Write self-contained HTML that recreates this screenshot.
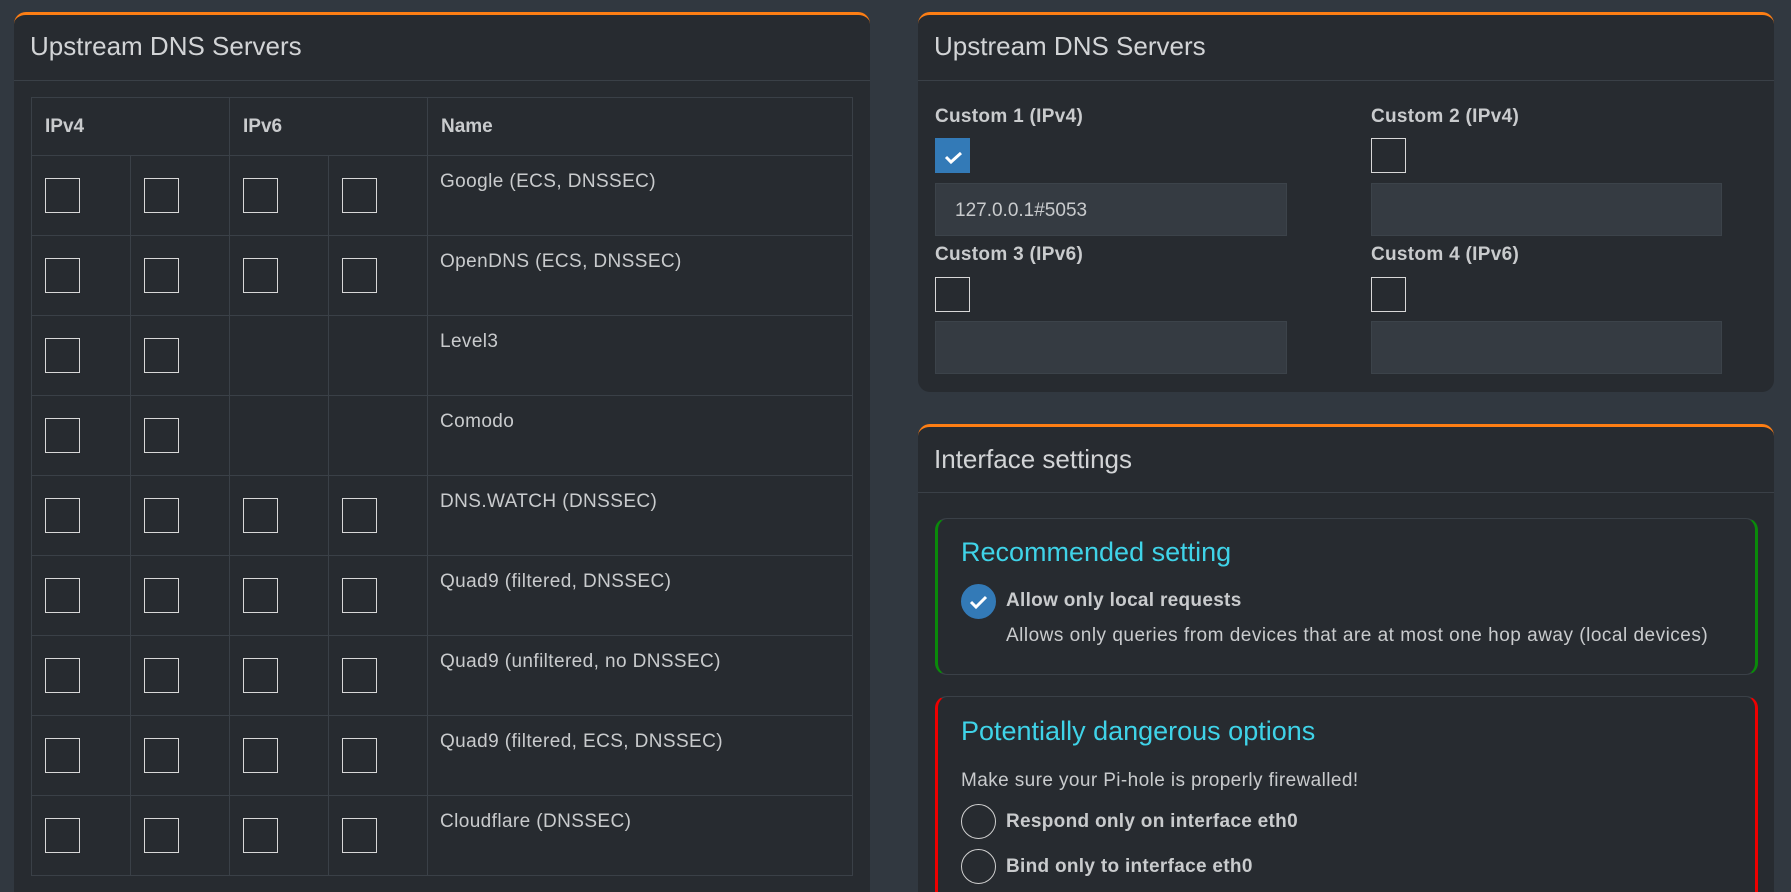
<!DOCTYPE html>
<html style="width:1791px;height:892px;overflow:hidden"><head><meta charset="utf-8"><style>
*{box-sizing:border-box;margin:0;padding:0}
body{width:1791px;height:892px;overflow:hidden;background:#313840;font-family:"Liberation Sans",sans-serif;color:#c9cbcd;position:relative}
.card{position:absolute;background:#272b30;border-radius:12px;border-top:3px solid #fd7e14;overflow:hidden}
.hd{position:absolute;left:0;right:0;top:0;height:66px;border-bottom:1px solid #3a4047}
.hd span{position:absolute;left:16px;top:16px;font-size:26px;color:#d2d4d6}
.abs{position:absolute}
.cb{position:absolute;width:35px;height:35px;border:1px solid #d8d8d8}
.lbl{position:absolute;font-weight:bold;font-size:19px;letter-spacing:0.3px}
.inp{position:absolute;background:#353b42;border:1px solid #3c434a;width:352px;height:53px;font-size:19px;padding:16px 0 0 19px}
table{position:absolute;left:17px;top:82px;border-collapse:collapse}
td{border:1px solid #3a4047;width:99px;height:80px;vertical-align:top;position:relative;font-size:19px;letter-spacing:0.4px}
th{border:1px solid #3a4047;height:58px;text-align:left;padding-left:13px;font-size:19px}
td .cb{left:13px;top:22px}
td.n{width:425px;padding:15px 0 0 12px}
.box{position:absolute;left:17px;width:823px;border-radius:12px;border:1px solid #3a4047;border-left:3px solid;border-right:3px solid}
.h3{position:absolute;left:23px;font-size:27px;color:#3fd3e8}
.rd{position:absolute;left:23px;width:35px;height:35px;border-radius:50%;border:1px solid #d0d0d0}
</style></head><body>
<div class="card" style="left:14px;top:12px;width:856px;height:880px;border-bottom-left-radius:0;border-bottom-right-radius:0">
<div class="hd"><span>Upstream DNS Servers</span></div>
<table>
<tr><th colspan="2">IPv4</th><th colspan="2">IPv6</th><th>Name</th></tr>
<tr><td><div class="cb"></div></td><td><div class="cb"></div></td><td><div class="cb"></div></td><td><div class="cb"></div></td><td class="n">Google (ECS, DNSSEC)</td></tr>
<tr><td><div class="cb"></div></td><td><div class="cb"></div></td><td><div class="cb"></div></td><td><div class="cb"></div></td><td class="n">OpenDNS (ECS, DNSSEC)</td></tr>
<tr><td><div class="cb"></div></td><td><div class="cb"></div></td><td></td><td></td><td class="n">Level3</td></tr>
<tr><td><div class="cb"></div></td><td><div class="cb"></div></td><td></td><td></td><td class="n">Comodo</td></tr>
<tr><td><div class="cb"></div></td><td><div class="cb"></div></td><td><div class="cb"></div></td><td><div class="cb"></div></td><td class="n">DNS.WATCH (DNSSEC)</td></tr>
<tr><td><div class="cb"></div></td><td><div class="cb"></div></td><td><div class="cb"></div></td><td><div class="cb"></div></td><td class="n">Quad9 (filtered, DNSSEC)</td></tr>
<tr><td><div class="cb"></div></td><td><div class="cb"></div></td><td><div class="cb"></div></td><td><div class="cb"></div></td><td class="n">Quad9 (unfiltered, no DNSSEC)</td></tr>
<tr><td><div class="cb"></div></td><td><div class="cb"></div></td><td><div class="cb"></div></td><td><div class="cb"></div></td><td class="n">Quad9 (filtered, ECS, DNSSEC)</td></tr>
<tr><td><div class="cb"></div></td><td><div class="cb"></div></td><td><div class="cb"></div></td><td><div class="cb"></div></td><td class="n">Cloudflare (DNSSEC)</td></tr>
</table>
</div>

<div class="card" style="left:918px;top:12px;width:856px;height:380px">
<div class="hd"><span>Upstream DNS Servers</span></div>
<div class="lbl" style="left:17px;top:91px">Custom 1 (IPv4)</div>
<div class="cb" style="left:17px;top:123px;background:#337ab7;border-color:#337ab7"><svg width="35" height="35" viewBox="0 0 35 35"><path d="M10 18l5 5 10-9" fill="none" stroke="#fff" stroke-width="3"/></svg></div>
<div class="inp" style="left:17px;top:168px">127.0.0.1#5053</div>
<div class="lbl" style="left:453px;top:91px">Custom 2 (IPv4)</div>
<div class="cb" style="left:453px;top:123px"></div>
<div class="inp" style="left:453px;top:168px;width:351px"></div>
<div class="lbl" style="left:17px;top:229px">Custom 3 (IPv6)</div>
<div class="cb" style="left:17px;top:262px"></div>
<div class="inp" style="left:17px;top:306px"></div>
<div class="lbl" style="left:453px;top:229px">Custom 4 (IPv6)</div>
<div class="cb" style="left:453px;top:262px"></div>
<div class="inp" style="left:453px;top:306px;width:351px"></div>
</div>

<div class="card" style="left:918px;top:424px;width:856px;height:468px;border-bottom-left-radius:0;border-bottom-right-radius:0">
<div class="hd"><span style="top:17px">Interface settings</span></div>
<div class="box" style="top:91px;height:157px;border-left-color:#0a8a0a;border-right-color:#0a8a0a">
<div class="h3" style="top:18px">Recommended setting</div>
<div class="rd" style="top:65px;background:#337ab7;border-color:#337ab7"><svg width="33" height="33" viewBox="0 0 33 33"><path d="M9 17l5 5 10-10" fill="none" stroke="#fff" stroke-width="3"/></svg></div>
<div class="lbl" style="left:68px;top:71px">Allow only local requests</div>
<div class="abs" style="left:68px;top:106px;font-size:19px;letter-spacing:0.5px">Allows only queries from devices that are at most one hop away (local devices)</div>
</div>
<div class="box" style="top:269px;height:220px;border-left-color:#e00;border-right-color:#e00;border-bottom:none;border-bottom-left-radius:0;border-bottom-right-radius:0">
<div class="h3" style="top:19px">Potentially dangerous options</div>
<div class="abs" style="left:23px;top:73px;font-size:19px;letter-spacing:0.4px">Make sure your Pi-hole is properly firewalled!</div>
<div class="rd" style="top:107px"></div>
<div class="lbl" style="left:68px;top:114px">Respond only on interface eth0</div>
<div class="rd" style="top:152px"></div>
<div class="lbl" style="left:68px;top:159px">Bind only to interface eth0</div>
<div class="rd" style="top:197px"></div>
</div>
</div>
</body></html>
